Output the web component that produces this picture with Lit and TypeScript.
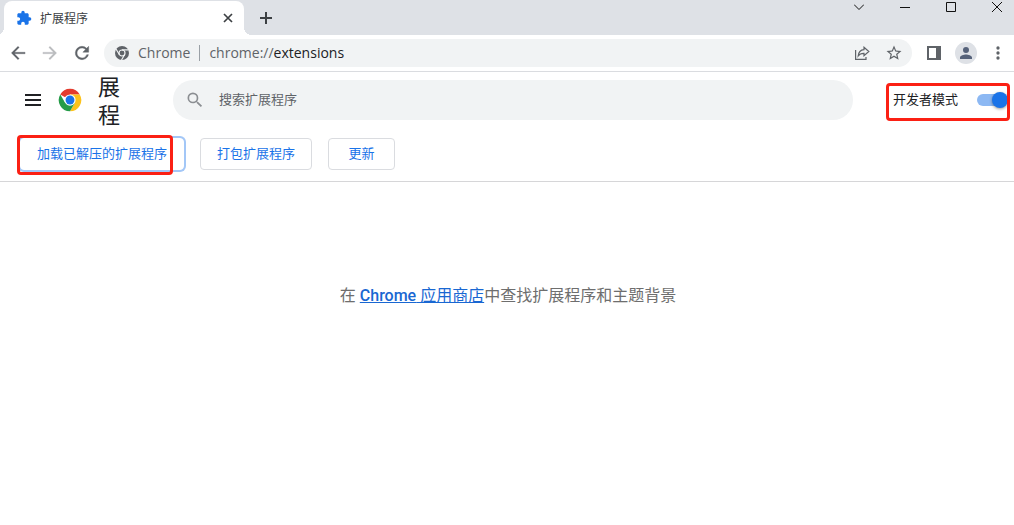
import { LitElement, html, css, svg } from "lit";
import { customElement, state } from "lit/decorators.js";

const material = (path: unknown, size = 20) => html`
  <svg width=${size} height=${size} viewBox="0 0 24 24" fill="currentColor" aria-hidden="true">${path}</svg>
`;

const icons = {
  puzzle: svg`<path d="M20.500 11H19V7c0-1.100-.9-2-2-2h-4V3.500a2.500 2.500 0 0 0-5 0V5H4c-1.100 0-1.990.9-1.990 2v3.800H3.500c1.490 0 2.700 1.210 2.700 2.700s-1.210 2.700-2.700 2.700H2V20c0 1.100.9 2 2 2h3.800v-1.500c0-1.490 1.210-2.700 2.700-2.700s2.700 1.210 2.700 2.700V22H17c1.100 0 2-.9 2-2v-4h1.500a2.500 2.500 0 0 0 0-5z"/>`,
  back: svg`<path stroke="currentColor" stroke-width=".3" d="M20.500 11H7.830l5.590-5.590L12 4l-8 8 8 8 1.410-1.410L7.830 13H20.500v-2z"/>`,
  forward: svg`<path stroke="currentColor" stroke-width=".3" d="M12 4l-1.410 1.410L16.170 11H3.500v2h12.670l-5.580 5.590L12 20l8-8z"/>`,
  reload: svg`<path stroke="currentColor" stroke-width=".5" d="M17.650 6.350A7.958 7.958 0 0 0 12 4a8 8 0 1 0 7.730 10h-2.080A5.990 5.990 0 0 1 12 18a6 6 0 1 1 0-12c1.660 0 3.140.69 4.220 1.780L13 11h7V4l-2.350 2.350z"/>`,
  star: svg`<path d="M22 9.240l-7.190-.62L12 2 9.190 8.630 2 9.240l5.460 4.730L5.820 21 12 17.270 18.180 21l-1.630-7.030L22 9.240zM12 15.400l-3.760 2.270 1-4.280-3.320-2.880 4.380-.38L12 6.100l1.710 4.040 4.380.38-3.320 2.880 1 4.280L12 15.400z"/>`,
  person: svg`<path d="M12 12a4 4 0 1 0 0-8 4 4 0 0 0 0 8zm0 2c-2.670 0-8 1.340-8 4v2h16v-2c0-2.660-5.330-4-8-4z"/>`,
  dots: svg`<path d="M12 8a2 2 0 1 0 0-4 2 2 0 0 0 0 4zm0 2a2 2 0 1 0 0 4 2 2 0 0 0 0-4zm0 6a2 2 0 1 0 0 4 2 2 0 0 0 0-4z"/>`,
  menu: svg`<path d="M4 6h16v2H4zM4 11h16v2H4zM4 16h16v2H4z"/>`,
  search: svg`<path d="M15.500 14h-.79l-.28-.27A6.471 6.471 0 0 0 16 9.500 6.500 6.500 0 1 0 9.500 16c1.610 0 3.090-.59 4.230-1.570l.27.28v.79l5 4.990L20.490 19l-4.990-5zm-6 0a4.500 4.500 0 1 1 0-9 4.500 4.500 0 0 1 0 9z"/>`,
};

@customElement("browser-tabs")
class BrowserTabs extends LitElement {
  static styles = css`
    :host { display: flex; height: 35px; background: #dee1e6; color: #3c4043; }
    button { border: 0; background: none; padding: 0; color: inherit; display: grid; place-items: center; }
    .tab {
      display: flex; align-items: center; width: 240px; box-sizing: border-box;
      margin: 1px 0 0 4px; padding: 0 8px 0 12px; gap: 8px;
      background: #fff; border-radius: 8px 8px 0 0; position: relative;
      font: 12px/16px "Noto Sans CJK SC", sans-serif;
    }
    .tab::before, .tab::after { content: ""; position: absolute; bottom: 0; width: 8px; height: 8px; }
    .tab::before { right: 100%; background: radial-gradient(circle at 0 0, transparent 8px, #fff 8px); }
    .tab::after { left: 100%; background: radial-gradient(circle at 100% 0, transparent 8px, #fff 8px); }
    .favicon { color: #1a73e8; display: flex; }
    .title { flex: 1; }
    .close { width: 16px; height: 16px; }
    .new { width: 28px; height: 28px; margin: 4px 0 0 8px; }
    .window { display: flex; gap: 12px; margin-left: auto; color: #111; }
    .window button { width: 34px; height: 14px; }
  `;

  render() {
    return html`
      <div class="tab" role="tab" aria-selected="true">
        <span class="favicon">${material(icons.puzzle, 16)}</span>
        <span class="title">扩展程序</span>
        <button class="close" aria-label="关闭标签页">
          <svg width="10" height="10" viewBox="0 0 10 10" stroke="currentColor" stroke-width="1.700"><path d="M1 1l8 8M9 1L1 9"/></svg>
        </button>
      </div>
      <button class="new" aria-label="新标签页">
        <svg width="12" height="12" viewBox="0 0 12 12" stroke="currentColor" stroke-width="2"><path d="M6 0v12M0 6h12"/></svg>
      </button>
      <div class="window">
        <button aria-label="搜索标签页"><svg width="10" height="10" viewBox="0 0 10 10" fill="none" stroke="currentColor"><path d="M0 2.500l5 5 5-5"/></svg></button>
        <button aria-label="最小化"><svg width="10" height="10" viewBox="0 0 10 10" stroke="currentColor"><path d="M0 5.500h10"/></svg></button>
        <button aria-label="最大化"><svg width="10" height="10" viewBox="0 0 10 10" fill="none" stroke="currentColor"><path d="M.5.500h9v9h-9z"/></svg></button>
        <button aria-label="关闭"><svg width="10" height="10" viewBox="0 0 10 10" stroke="currentColor"><path d="M0 0l10 10M10 0L0 10"/></svg></button>
      </div>
    `;
  }
}

@customElement("browser-toolbar")
class BrowserToolbar extends LitElement {
  static styles = css`
    :host {
      display: flex; align-items: center; height: 36px; gap: 4px; padding: 0 2px 0 4px;
      background: #fff; border-bottom: 1px solid #dadce0; color: #5f6368;
    }
    button {
      border: 0; background: none; padding: 0; color: inherit; font: inherit;
      width: 28px; height: 28px; display: grid; place-items: center; flex: none;
    }
    button:disabled { color: #babcbe; }
    .omnibox {
      flex: 1; min-width: 0; height: 28px; box-sizing: border-box; margin: 0 4px; padding: 0 4px 0 10px;
      display: flex; align-items: center; gap: 4px; border-radius: 14px; background: #f1f3f4;
      font: 14px/20px "Open Sans", "Noto Sans", sans-serif;
    }
    .site { width: auto; display: flex; align-items: center; gap: 8px; }
    .url { flex: 1; margin-left: 5px; display: flex; align-items: center; outline: 0; }
    .rule { width: 1px; height: 16px; margin-left: 5px; background: #9aa0a6; }
    .path { color: #202124; }
    .avatar { width: 22px; height: 22px; border-radius: 50%; background: #dee1e6; color: #56627a; display: grid; place-items: center; }
  `;

  render() {
    return html`
      <button aria-label="后退">${material(icons.back)}</button>
      <button aria-label="前进" disabled>${material(icons.forward)}</button>
      <button aria-label="重新加载">${material(icons.reload)}</button>
      <div class="omnibox">
        <button class="site">
          <svg width="16" height="16" viewBox="0 0 16 16" aria-hidden="true">
            <circle cx="8" cy="8" r="7" fill="#5f6368"/>
            <circle cx="8" cy="8" r="3" fill="none" stroke="#f1f3f4" stroke-width="1.200"/>
            <path d="M8 4.900h6.600M5.300 9.500L2 4M10.700 9.500L7.500 15" stroke="#f1f3f4" stroke-width="1.200"/>
          </svg>
          <span>Chrome</span>
        </button>
        <span class="rule"></span>
        <div class="url" role="textbox" aria-label="地址"><span>chrome://</span><span class="path">extensions</span></div>
        <button aria-label="分享">
          <svg width="16" height="16" viewBox="0 0 16 16" fill="none" stroke="currentColor" stroke-width="1.200" aria-hidden="true">
            <path d="M1.600 5v9.400h10.400V12"/><path d="M10 2.300l4.800 4.200-4.800 4.200V8.400C7.300 8.300 5.500 9.200 4.200 11 4.500 7.600 6.500 5 10 4.700z"/>
          </svg>
        </button>
        <button aria-label="添加书签">${material(icons.star, 18)}</button>
      </div>
      <button aria-label="侧边栏">
        <svg width="14" height="14" viewBox="0 0 14 14" aria-hidden="true"><path fill="currentColor" fill-rule="evenodd" d="M0 0h14v14H0zM2 2v10h7V2z"/></svg>
      </button>
      <button aria-label="个人资料"><span class="avatar">${material(icons.person, 18)}</span></button>
      <button aria-label="菜单">${material(icons.dots, 20)}</button>
    `;
  }
}

@customElement("app-root")
class AppRoot extends LitElement {
  static styles = css`
    :host { display: block; background: #fff; color: #202124; font: 13px/20px Roboto, "Noto Sans CJK SC", sans-serif; }
    .header { display: grid; grid-template: 56px / 173px minmax(0, 680px) 1fr; align-items: center; }
    .brand { display: flex; align-items: center; gap: 13px; padding-left: 21px; }
    .menu { border: 0; background: none; padding: 0; color: inherit; width: 24px; height: 24px; display: grid; place-items: center; }
    .name { margin: 0 0 0 3px; padding-top: 4px; width: 24px; font-size: 22px; line-height: 28px; font-weight: 400; word-break: break-all; }
    .search { display: flex; align-items: center; gap: 14px; height: 40px; box-sizing: border-box; padding: 0 12px; border-radius: 20px; background: #f1f3f4; }
    .search label { display: flex; color: #8b8e92; }
    .search input { flex: 1; min-width: 0; border: 0; padding: 0; outline: 0; background: none; font: inherit; color: inherit; }
    .search input::placeholder { color: #5f6368; opacity: 1; }
    .dev { display: flex; justify-content: flex-end; align-items: center; gap: 19px; padding-right: 11px; }
    .marked { position: relative; }
    .marked::after { content: ""; position: absolute; border: 3px solid #fb2014; border-radius: 4px; pointer-events: none; }
    .dev.marked::after { inset: -7px 4px -11px auto; width: 118px; }
    .toggle { appearance: none; position: relative; margin: 0; width: 26px; height: 12px; border-radius: 6px; background: #bdc1c6; }
    .toggle::after {
      content: ""; position: absolute; top: -2px; left: -5px; width: 16px; height: 16px;
      border-radius: 50%; background: #fff; box-shadow: 0 1px 3px rgb(0 0 0 / 40%);
    }
    .toggle:checked { background: #8cb8f3; }
    .toggle:checked::after { left: 15px; background: #1a73e8; }
    .actions { display: flex; gap: 16px; padding: 10px 20px 11px; border-bottom: 1px solid #d6d6d8; }
    .action {
      height: 32px; min-width: 67px; padding: 0 16px; border: 1px solid #dadce0; border-radius: 4px;
      background: #fff; color: #1a73e8; font: inherit; display: block;
    }
    .focused { border-color: #fff; box-shadow: 0 0 0 2px #a3c7f7; }
    .load.marked::after { inset: -3px 11px -5px -3px; }
    .empty { margin: 0; padding: 102px 24px 0 26px; text-align: center; font-size: 16px; line-height: 24px; color: #6e6e6e; }
    .empty a { color: #1967d2; }
    .latin { font-weight: 500; }
  `;

  @state() private developerMode = true;

  private toggleMode(event: Event) {
    this.developerMode = (event.target as HTMLInputElement).checked;
  }

  private renderActions() {
    return html`
      <div class="actions">
        <div class="load marked"><button class="action focused">加载已解压的扩展程序</button></div>
        <button class="action">打包扩展程序</button>
        <button class="action">更新</button>
      </div>
    `;
  }

  render() {
    return html`
      <browser-tabs></browser-tabs>
      <browser-toolbar></browser-toolbar>
      <header class="header">
        <div class="brand">
          <button class="menu" aria-label="主菜单">${material(icons.menu, 24)}</button>
          <svg width="24" height="24" viewBox="0 0 48 48" aria-hidden="true">
            <path fill="#e33b2e" d="M24 24L4.500 12.750A22.500 22.500 0 0 1 43.500 12.750H24z"/>
            <path fill="#fcc21b" d="M24 12.750h19.500A22.500 22.500 0 0 1 24 46.500l9.750-16.880z"/>
            <path fill="#259b48" d="M4.500 12.750A22.500 22.500 0 0 0 24 46.500l9.750-16.880L24 24l-9.750 5.630z"/>
            <circle cx="24" cy="24" r="11.250" fill="#fff"/>
            <circle cx="24" cy="24" r="8.900" fill="#1a73e8"/>
          </svg>
          <h1 class="name">展程</h1>
        </div>
        <div class="search">
          <label for="search" aria-label="搜索">${material(icons.search)}</label>
          <input id="search" type="text" placeholder="搜索扩展程序" />
        </div>
        <div class="dev marked">
          <label for="mode">开发者模式</label>
          <input class="toggle" id="mode" type="checkbox" .checked=${this.developerMode} @change=${this.toggleMode} />
        </div>
      </header>
      ${this.developerMode ? this.renderActions() : null}
      <p class="empty">在 <a href="#store"><span class="latin">Chrome</span> 应用商店</a>中查找扩展程序和主题背景</p>
    `;
  }
}
